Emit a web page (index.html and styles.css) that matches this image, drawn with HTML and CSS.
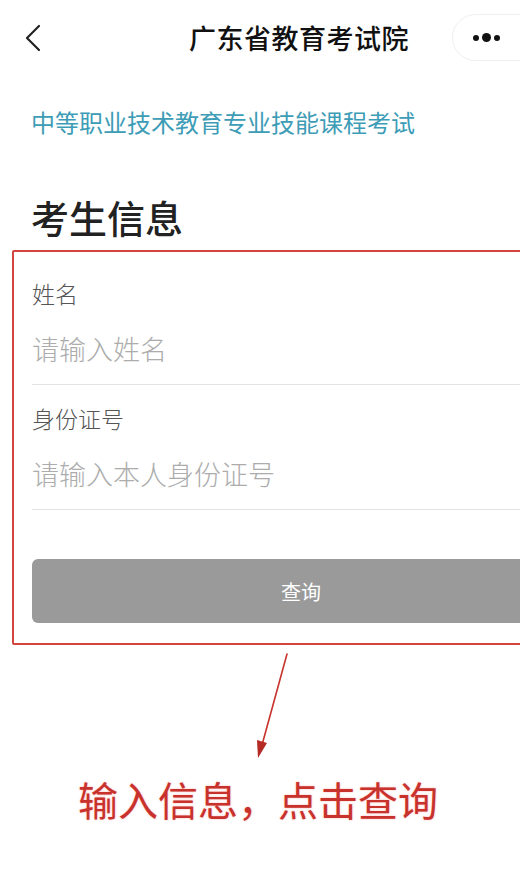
FILE: index.html
```html
<!DOCTYPE html>
<html lang="zh-CN">
<head>
<meta charset="utf-8">
<title>广东省教育考试院</title>
<link rel="stylesheet" href="styles.css">
</head>
<body>
<div class="frame">
<div class="page">
  <header class="nav">
    <div class="back">
      <svg width="18" height="28" viewBox="0 0 18 28"><path d="M15 2 L3 14 L15 26" fill="none" stroke="#222" stroke-width="2.2" stroke-linecap="round" stroke-linejoin="round"/></svg>
    </div>
    <div class="title">广东省教育考试院</div>
    <div class="more">
      <span class="dot small"></span><span class="dot big"></span><span class="dot small"></span>
    </div>
  </header>

  <div class="subtitle">中等职业技术教育专业技能课程考试</div>
  <h1 class="heading">考生信息</h1>

  <section class="box">
    <div class="field">
      <div class="label">姓名</div>
      <div class="input">请输入姓名</div>
    </div>
    <div class="field">
      <div class="label">身份证号</div>
      <div class="input">请输入本人身份证号</div>
    </div>
    <div class="btn">查询</div>
  </section>

  <svg class="arrow" width="598" height="114" viewBox="0 0 598 114">
    <line x1="287" y1="9" x2="262" y2="100" stroke="#c8322c" stroke-width="1.6" stroke-linecap="round"/>
    <polygon points="258,113 257,95 267,98" fill="#b52a25"/>
  </svg>
  <div class="note">输入信息，点击查询</div>
</div>
</div>
</body>
</html>
```

FILE: styles.css
```css
html, body {
  margin: 0;
  padding: 0;
  background: #fff;
}
body {
  font-family: "Noto Sans CJK SC", "Noto Sans", sans-serif;
}
.frame {
  width: 520px;
  height: 887px;
  overflow: hidden;
}
.page {
  width: 598px;
}
.nav {
  height: 76px;
  display: flex;
  align-items: center;
  justify-content: center;
  position: relative;
}
.back {
  position: absolute;
  left: 24px;
  top: 24px;
}
.title {
  font-size: 27px;
  line-height: 36px;
  color: #111;
  font-weight: 500;
  letter-spacing: 0.5px;
}
.more {
  position: absolute;
  left: 452px;
  top: 14px;
  width: 120px;
  height: 47px;
  border: 1px solid #efefef;
  border-radius: 24px;
  display: flex;
  align-items: center;
  padding-left: 20px;
  gap: 3px;
  box-sizing: border-box;
}
.dot {
  display: block;
  background: #111;
  border-radius: 50%;
}
.dot.small { width: 6px; height: 6px; }
.dot.big { width: 9px; height: 9px; }

.subtitle {
  margin-top: 29px;
  padding-left: 31px;
  font-size: 24px;
  line-height: 34px;
  color: #3d9cb6;
}
.heading {
  margin: 54px 0 0;
  padding-left: 31px;
  font-size: 38px;
  line-height: 48px;
  font-weight: 500;
  color: #222;
}
.box {
  margin: 9px 0 0 12px;
  border: 2px solid #d2453f;
  border-radius: 2px;
  padding: 8px 0 20px 17px;
}
.field {
  padding-top: 18px;
  padding-bottom: 17px;
  border-bottom: 1px solid #e3e3e3;
  margin-left: 1px;
}
.label {
  font-size: 23px;
  line-height: 30px;
  color: #555;
  font-weight: 300;
}
.input {
  margin-top: 23px;
  font-size: 27px;
  line-height: 36px;
  color: #acacac;
  font-weight: 300;
}
.btn {
  margin-top: 49px;
  height: 64px;
  width: 538px;
  background: #9a9a9a;
  border-radius: 6px;
  color: #fff;
  font-size: 20px;
  display: flex;
  align-items: center;
  justify-content: center;
  margin-left: 1px;
}
.arrow {
  display: block;
}
.note {
  margin-top: 15px;
  padding-left: 78px;
  font-size: 40px;
  line-height: 50px;
  color: #c8322c;
  text-shadow: 0 0 2px rgba(255, 120, 120, 0.6);
}
```
